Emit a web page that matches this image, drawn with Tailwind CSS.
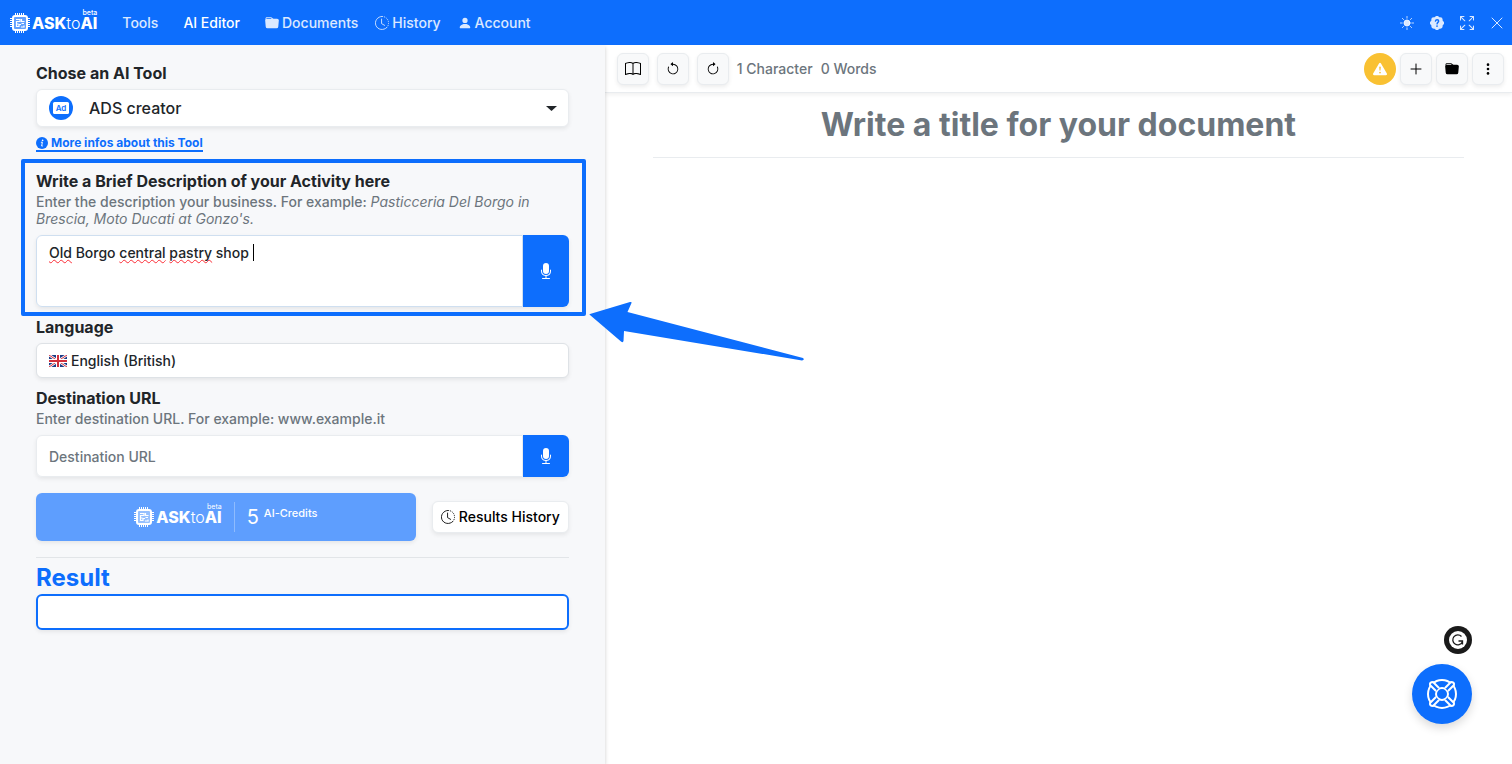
<!DOCTYPE html>
<html lang="en">
  <head>
    <meta charset="UTF-8" />
    <meta name="viewport" content="width=device-width, initial-scale=1.0" />
    <title>ASKtoAI | AI Editor</title>
    <!-- Tailwind CSS CDN -->
    <script src="https://cdn.jsdelivr.net/npm/@tailwindcss/browser@4"></script>
  </head>
  <body class="min-h-screen flex flex-col bg-white font-['Inter',sans-serif] text-[#212529] overflow-x-hidden">
    <!-- Icon sprite -->
    <svg class="hidden" aria-hidden="true">
      <symbol id="i-chip" viewBox="0 0 20 20">
        <path d="M5.500 0v4M7.500 0v4M9.500 0v4M11.500 0v4M13.500 0v4M5.500 16v4M7.500 16v4M9.500 16v4M11.500 16v4M13.500 16v4M0 5.500h4M0 7.500h4M0 9.500h4M0 11.500h4M0 13.500h4M16 5.500h4M16 7.500h4M16 9.500h4M16 11.500h4M16 13.500h4" stroke="currentColor" />
        <rect x="3" y="3" width="14" height="14" rx="2" fill="currentColor" fill-opacity=".35" stroke="currentColor" stroke-width="2" />
        <path d="M6 6.500h4v2H6.500v5h2.500v-2h2M11.500 6v2.500h3M14 10.500h-2.500M14 12.500v1.500h-3M6 11h2.500" fill="none" stroke="currentColor" stroke-width="1.200" />
      </symbol>
      <symbol id="i-folder" viewBox="0 0 16 16">
        <path fill="currentColor" d="M9.828 3h3.982a2 2 0 0 1 1.992 2.181l-.637 7A2 2 0 0 1 13.174 14H2.825a2 2 0 0 1-1.991-1.819l-.637-7a2 2 0 0 1 .342-1.31L.5 3a2 2 0 0 1 2-2h3.672a2 2 0 0 1 1.414.586l.828.828A2 2 0 0 0 9.828 3m-8.322.12q.322-.119.684-.12h5.396l-.707-.707A1 1 0 0 0 6.172 2H2.500a1 1 0 0 0-1 .981z" />
      </symbol>
      <symbol id="i-history" viewBox="0 0 16 16">
        <g fill="none" stroke="currentColor">
          <path d="M8 .5a7.500 7.500 0 1 0 5.300 12.800" stroke-linecap="round" />
          <path d="M8 .5a7.500 7.500 0 0 1 5.300 12.800" stroke-dasharray="1.300 1" />
          <path d="M7.500 3.500v5.200l3.500 2" stroke-linecap="round" />
        </g>
      </symbol>
      <symbol id="i-person" viewBox="0 0 16 16">
        <path fill="currentColor" d="M3 14s-1 0-1-1 1-4 6-4 6 3 6 4-1 1-1 1zm5-6a3 3 0 1 0 0-6 3 3 0 0 0 0 6" />
      </symbol>
      <symbol id="i-mic" viewBox="0 0 16 16">
        <path fill="currentColor" d="M5 3a3 3 0 0 1 6 0v5a3 3 0 0 1-6 0z" />
        <path fill="currentColor" d="M3.500 6.500A.5.5 0 0 1 4 7v1a4 4 0 0 0 8 0V7a.5.5 0 0 1 1 0v1a5 5 0 0 1-4.500 4.975V15h3a.5.5 0 0 1 0 1h-7a.5.5 0 0 1 0-1h3v-2.025A5 5 0 0 1 3 8V7a.5.5 0 0 1 .5-.5" />
      </symbol>
    </svg>

    <!-- Navbar -->
    <nav class="flex items-center h-[45px] bg-[#0d6efd] pl-[10px] pr-2 text-sm font-medium text-white/85">
      <a href="#" class="relative flex items-center gap-[2px] text-white" aria-label="ASKtoAI beta">
        <svg class="size-5"><use href="#i-chip" /></svg>
        <span class="text-base leading-3 font-extrabold">ASK<span class="font-light">to</span>AI</span>
        <span class="absolute right-0 -top-1 text-[7px] leading-[7px]">beta</span>
      </a>
      <div class="flex items-center gap-[17px] ml-[25px]">
        <a href="#">Tools</a>
        <a href="#" class="mx-2 text-white">AI Editor</a>
        <a href="#" class="flex items-center gap-[3px]"><svg class="size-[14px]"><use href="#i-folder" /></svg>Documents</a>
        <a href="#" class="flex items-center gap-[3px]"><svg class="size-[14px]"><use href="#i-history" /></svg>History</a>
        <a href="#" class="flex items-center gap-[3px]"><svg class="size-[14px]"><use href="#i-person" /></svg>Account</a>
      </div>
      <div class="flex items-center gap-4 ml-auto">
        <button aria-label="Light mode">
          <svg class="size-[14px]" viewBox="0 0 16 16" fill="currentColor" stroke="currentColor" stroke-linecap="round">
            <circle cx="8" cy="8" r="3.500" />
            <path d="M8 .5v2M8 13.500v2M.5 8h2M13.500 8h2M2.700 2.700l1.400 1.400M11.900 11.900l1.400 1.400M2.700 13.300l1.400-1.400M11.900 4.100l1.400-1.400" />
          </svg>
        </button>
        <button aria-label="Help">
          <svg class="size-[14px]" viewBox="0 0 16 16">
            <path fill="currentColor" d="M5.933.87a2.890 2.890 0 0 1 4.134 0l.622.638.89-.011a2.890 2.890 0 0 1 2.924 2.924l-.01.89.636.622a2.890 2.890 0 0 1 0 4.134l-.637.622.011.89a2.890 2.890 0 0 1-2.924 2.924l-.89-.01-.622.636a2.890 2.890 0 0 1-4.134 0l-.622-.637-.89.011a2.890 2.890 0 0 1-2.924-2.924l.01-.89-.636-.622a2.890 2.890 0 0 1 0-4.134l.637-.622-.011-.89a2.890 2.890 0 0 1 2.924-2.924l.89.01z" />
            <path fill="none" stroke="#0d6efd" stroke-width="1.600" stroke-linecap="round" d="M6.200 5.800c.2-1 .9-1.600 1.900-1.600 1.100 0 1.800.7 1.800 1.600 0 1.500-1.800 1.500-1.800 3.200" />
            <circle cx="8" cy="11.500" r="1" fill="#0d6efd" />
          </svg>
        </button>
        <button aria-label="Full screen">
          <svg class="size-[14px]" viewBox="0 0 16 16" fill="none" stroke="currentColor" stroke-width="1.200" stroke-linecap="round" stroke-linejoin="round">
            <path d="M.6 4.500V.6h3.900M.6.6l4.900 4.900M11.500.6h3.900v3.900M15.400.6l-4.900 4.900M.6 11.500v3.900h3.900M.6 15.400l4.900-4.900M11.500 15.400h3.900v-3.900M15.400 15.400l-4.900-4.900" />
          </svg>
        </button>
        <button aria-label="Close">
          <svg class="size-[14px]" viewBox="0 0 14 14" fill="none" stroke="currentColor" stroke-linecap="round">
            <path d="M2 2l10 10M12 2L2 12" />
          </svg>
        </button>
      </div>
    </nav>

    <div class="flex flex-1">
      <!-- Tool form -->
      <form class="relative z-10 w-2/5 shrink-0 bg-[#f7f8fa] px-9 pt-4 shadow-[0_2px_4px_rgba(0,0,0,0.2)] [clip-path:inset(0_-250px_0_0)]">
        <label for="tool" class="block font-bold leading-6">Chose an AI Tool</label>
        <div class="relative mt-1">
          <select id="tool" class="block w-full h-[38px] appearance-none rounded-md border border-[#e9ecef] bg-white pl-[52px] pr-8 font-medium shadow-[0_2px_4px_rgba(0,0,0,0.075)]">
            <option>ADS creator</option>
          </select>
          <svg class="absolute left-[13px] top-[7px] size-6 pointer-events-none" viewBox="0 0 24 24" aria-hidden="true">
            <circle cx="12" cy="12" r="12" fill="#0d6efd" />
            <rect x="4" y="6" width="16" height="12" rx="1.500" fill="#fff" />
            <text x="12" y="15" text-anchor="middle" font-size="8" font-weight="600" fill="#0d6efd">Ad</text>
          </svg>
          <svg class="absolute right-3 top-[17px] w-[11px] h-[5px] pointer-events-none" viewBox="0 0 11 5" aria-hidden="true"><path d="M0 0h11L5.500 5z" fill="#212529" /></svg>
        </div>
        <a href="#" class="flex w-fit items-center gap-[3px] mt-2 border-b-2 border-[#0d6efd] text-xs leading-[15px] font-bold text-[#0d6efd]">
          <svg class="size-3" viewBox="0 0 16 16"><circle cx="8" cy="8" r="8" fill="currentColor" /><circle cx="8.800" cy="4.500" r="1.100" fill="#fff" /><path d="M6.500 7h2l-1 5h1.500" fill="none" stroke="#fff" stroke-width="1.300" /></svg>
          More infos about this Tool
        </a>

        <!-- Highlighted field -->
        <div class="relative mt-[17px]">
          <label for="activity" class="block font-bold leading-6">Write a Brief Description of your Activity here</label>
          <p class="text-sm leading-[17px] font-medium text-[#6c757d]">Enter the description your business. For example: <em class="font-normal">Pasticceria Del Borgo in Brescia, Moto Ducati at Gonzo's.</em></p>
          <div class="relative flex mt-2 rounded-md shadow-[0_2px_4px_rgba(0,0,0,0.075)]">
            <textarea id="activity" spellcheck="false" class="flex-1 h-[72px] resize-none rounded-l-md border border-[#cfdff0] bg-white px-3 py-[7px] text-sm leading-5 font-medium outline-none">Old Borgo central pastry shop </textarea>
            <button type="button" aria-label="Dictate description" class="w-[46px] flex items-center justify-center rounded-r-md bg-[#0d6efd] text-white"><svg class="size-4"><use href="#i-mic" /></svg></button>
            <!-- Spelling marks and caret -->
            <div aria-hidden="true" class="absolute left-[13px] top-2 text-sm leading-5 font-medium whitespace-pre text-transparent pointer-events-none select-none"><span class="underline decoration-wavy decoration-1 underline-offset-1 decoration-red-500 [text-decoration-skip-ink:none]">Old</span> Borgo <span class="underline decoration-wavy decoration-1 underline-offset-1 decoration-red-500 [text-decoration-skip-ink:none]">central</span> <span class="underline decoration-wavy decoration-1 underline-offset-1 decoration-red-500 [text-decoration-skip-ink:none]">pastry</span> shop <span class="border-l border-black"></span></div>
          </div>
          <div class="absolute -top-[10px] -bottom-[9px] -left-[15px] -right-[17px] rounded-xs border-4 border-[#0d6efd] pointer-events-none"></div>
          <svg class="absolute left-full ml-5 -bottom-[55px] w-[216px] h-[62px] pointer-events-none" viewBox="0 0 216 62" fill="#0d6efd" aria-hidden="true">
            <path d="M1 14L41 2Q43 1.500 42.500 3L38.500 12L214 58Q216 60 213 60.500L35 31L34.500 41Q34 43 32 41.500L1 15Q0 14.400 1 14Z" />
          </svg>
        </div>

        <label for="language" class="block mt-2 font-bold leading-6">Language</label>
        <div class="relative mt-1">
          <select id="language" class="block w-full h-[35px] appearance-none rounded-md border border-[#dee2e6] bg-white pl-[34px] pr-3 text-sm font-medium shadow-[0_2px_4px_rgba(0,0,0,0.075)]">
            <option>English (British)</option>
          </select>
          <svg class="absolute left-[13px] top-3 w-[18px] h-3 pointer-events-none" viewBox="0 0 36 24" aria-hidden="true">
            <rect width="36" height="24" rx="2" fill="#1b3c87" />
            <path d="M0 0l36 24M36 0L0 24" stroke="#fff" stroke-width="5" />
            <path d="M0 0l36 24M36 0L0 24" stroke="#d22f3c" stroke-width="2" />
            <path d="M18 0v24M0 12h36" stroke="#fff" stroke-width="8" />
            <path d="M18 0v24M0 12h36" stroke="#d22f3c" stroke-width="4" />
          </svg>
        </div>

        <label for="url" class="block mt-2 font-bold leading-6">Destination URL</label>
        <p class="text-sm leading-[17px] font-medium text-[#6c757d]">Enter destination URL. For example: www.example.it</p>
        <div class="flex mt-2 rounded-md shadow-[0_2px_4px_rgba(0,0,0,0.075)]">
          <input id="url" type="text" placeholder="Destination URL" class="flex-1 h-[42px] rounded-l-md border border-[#e9ecef] bg-white px-3 text-sm font-medium placeholder:text-[#6c757d]" />
          <button type="button" aria-label="Dictate URL" class="w-[46px] flex items-center justify-center rounded-r-md bg-[#0d6efd] text-white"><svg class="size-4"><use href="#i-mic" /></svg></button>
        </div>

        <div class="flex items-center gap-4 mt-4">
          <button type="button" class="flex flex-1 items-center justify-center h-12 rounded-md bg-[#5e9efe] text-white shadow-[0_2px_4px_rgba(0,0,0,0.075)]">
            <span class="relative flex items-center gap-[2px]">
              <svg class="size-5"><use href="#i-chip" /></svg>
              <span class="text-base leading-3 font-extrabold">ASK<span class="font-light">to</span>AI</span>
              <span class="absolute right-0 -top-1 text-[7px] leading-[7px]">beta</span>
            </span>
            <span class="flex items-center gap-[5px] h-[30px] ml-3 pl-3 border-l border-white/30">
              <span class="text-xl">5</span>
              <span class="mb-2 text-[11px] font-medium">AI-Credits</span>
            </span>
          </button>
          <button type="button" class="flex items-center gap-1 h-8 px-2 rounded-md border border-[#e9ecef] bg-white text-sm font-medium text-black shadow-[0_2px_4px_rgba(0,0,0,0.075)]"><svg class="size-[14px]"><use href="#i-history" /></svg>Results History</button>
        </div>

        <hr class="mt-4 border-[#e2e5e8]" />
        <h2 class="mt-1 text-2xl leading-8 font-bold text-[#0d6efd]">Result</h2>
        <div class="h-9 rounded-md border-2 border-[#0d6efd] bg-white shadow-[0_2px_4px_rgba(0,0,0,0.075)]"></div>
      </form>

      <!-- Document editor -->
      <main class="flex-1 min-w-0">
        <div class="flex items-center h-12 pl-3 pr-2 border-b border-[#e9ecef] shadow-[0_2px_4px_rgba(0,0,0,0.06)]">
          <div class="flex items-center gap-2">
            <button aria-label="Library" class="size-8 flex items-center justify-center rounded-md border border-[#e9ecef] bg-[#f8f9fa] text-black shadow-[0_2px_4px_rgba(0,0,0,0.075)]">
              <svg class="size-4" viewBox="0 0 16 16" fill="currentColor"><path d="M1 2.828c.885-.37 2.154-.769 3.388-.893 1.330-.134 2.458.063 3.112.752v9.746c-.935-.53-2.120-.603-3.213-.493-1.180.12-2.370.461-3.287.811zm7.500-.141c.654-.689 1.782-.886 3.112-.752 1.234.124 2.503.523 3.388.893v9.923c-.918-.35-2.107-.692-3.287-.81-1.094-.111-2.278-.039-3.213.492zM8 1.783C7.015.936 5.587.81 4.287.94c-1.514.153-3.042.672-3.994 1.105A.5.5 0 0 0 0 2.500v11a.5.5 0 0 0 .707.455c.882-.4 2.303-.881 3.680-1.020 1.409-.142 2.590.087 3.223.877a.5.5 0 0 0 .78 0c.633-.79 1.814-1.019 3.222-.877 1.378.139 2.800.62 3.681 1.020A.5.5 0 0 0 16 13.500v-11a.5.5 0 0 0-.293-.455c-.952-.433-2.480-.952-3.994-1.105C10.413.809 8.985.936 8 1.783" /></svg>
            </button>
            <button aria-label="Undo" class="size-8 flex items-center justify-center rounded-md border border-[#e9ecef] bg-[#f8f9fa] text-black shadow-[0_2px_4px_rgba(0,0,0,0.075)]">
              <svg class="size-[14px]" viewBox="0 0 16 16" fill="currentColor"><path d="M8 3a5 5 0 1 1-4.546 2.914.5.5 0 0 0-.908-.417A6 6 0 1 0 8 2z" /><path d="M8 4.466V.534a.25.25 0 0 0-.41-.192L5.230 2.308a.25.25 0 0 0 0 .384l2.360 1.966A.25.25 0 0 0 8 4.466" /></svg>
            </button>
            <button aria-label="Redo" class="size-8 flex items-center justify-center rounded-md border border-[#e9ecef] bg-[#f8f9fa] text-black shadow-[0_2px_4px_rgba(0,0,0,0.075)]">
              <svg class="size-[14px]" viewBox="0 0 16 16" fill="currentColor"><path d="M8 3a5 5 0 1 0 4.546 2.914.5.5 0 0 1 .908-.417A6 6 0 1 1 8 2z" /><path d="M8 4.466V.534a.25.25 0 0 1 .41-.192l2.360 1.966c.12.1.12.284 0 .384L8.410 4.658A.25.25 0 0 1 8 4.466" /></svg>
            </button>
            <span class="text-sm font-medium text-[#6c757d]">1 Character</span>
            <span class="text-sm font-medium text-[#6c757d]">0 Words</span>
          </div>
          <div class="flex items-center gap-1 ml-auto">
            <button aria-label="Warnings" class="size-8 flex items-center justify-center rounded-full bg-[#f9c132] text-white">
              <svg class="size-[14px]" viewBox="0 0 16 16" fill="currentColor"><path d="M8.982 1.566a1.130 1.130 0 0 0-1.960 0L.165 13.233c-.457.778.091 1.767.98 1.767h13.713c.889 0 1.438-.99.98-1.767zM8 5c.535 0 .954.462.9.995l-.35 3.507a.552.552 0 0 1-1.100 0L7.100 5.995A.905.905 0 0 1 8 5m.002 6a1 1 0 1 1 0 2 1 1 0 0 1 0-2" /></svg>
            </button>
            <button aria-label="New document" class="size-8 flex items-center justify-center rounded-md border border-[#e9ecef] bg-[#f8f9fa] text-black shadow-[0_2px_4px_rgba(0,0,0,0.075)]">
              <svg class="size-[14px]" viewBox="0 0 14 14" fill="none" stroke="currentColor" stroke-linecap="round"><path d="M7 2v10M2 7h10" /></svg>
            </button>
            <button aria-label="Open folder" class="size-8 flex items-center justify-center rounded-md border border-[#e9ecef] bg-[#f8f9fa] text-black shadow-[0_2px_4px_rgba(0,0,0,0.075)]">
              <svg class="size-[14px]"><use href="#i-folder" /></svg>
            </button>
            <button aria-label="More" class="size-8 flex items-center justify-center rounded-md border border-[#e9ecef] bg-[#f8f9fa] text-black shadow-[0_2px_4px_rgba(0,0,0,0.075)]">
              <svg class="size-[14px]" viewBox="0 0 16 16" fill="currentColor"><circle cx="8" cy="3" r="1.500" /><circle cx="8" cy="8" r="1.500" /><circle cx="8" cy="13" r="1.500" /></svg>
            </button>
          </div>
        </div>
        <div class="px-12">
          <input type="text" aria-label="Document title" placeholder="Write a title for your document" class="block w-full h-[65px] pb-[2px] border-b border-[#e9ecef] text-center text-[32px] font-bold outline-none placeholder:text-[#6c757d]" />
        </div>
      </main>
    </div>

    <!-- Floating buttons -->
    <div class="fixed right-10 bottom-10 flex flex-col items-end gap-[10px]">
      <button aria-label="Grammar check" class="size-7 rounded-full">
        <svg class="size-7" viewBox="0 0 28 28">
          <circle cx="14" cy="14" r="14" fill="#1a1a1a" />
          <circle cx="14" cy="14" r="9" fill="#fff" />
          <path d="M17.500 10.500a5 5 0 1 0 .8 5.500M14.500 15h4v3.500" fill="none" stroke="#1a1a1a" stroke-width="1.300" />
        </svg>
      </button>
      <button aria-label="Support" class="size-[60px] flex items-center justify-center rounded-full bg-[#0d6efd] text-white shadow-[0_4px_10px_rgba(0,0,0,0.15)]">
        <svg class="size-8" viewBox="0 0 32 32" fill="none" stroke="currentColor" stroke-width="2">
          <circle cx="16" cy="16" r="14" />
          <circle cx="16" cy="16" r="6" />
          <path fill="#0d6efd" stroke-linejoin="round" d="M10 13L4 7Q3.500 4 7 4L13 10M22 13L28 7Q28.500 4 25 4L19 10M10 19L4 25Q3.500 28 7 28L13 22M22 19L28 25Q28.500 28 25 28L19 22" />
        </svg>
      </button>
    </div>
  </body>
</html>
